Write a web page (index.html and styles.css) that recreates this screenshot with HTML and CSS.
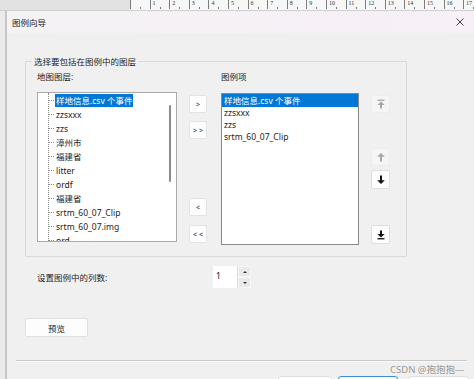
FILE: index.html
```html
<!DOCTYPE html>
<html lang="zh-CN">
<head>
    <meta charset="UTF-8">
    <title>图例向导</title>
    <link rel="stylesheet" href="styles.css">
</head>
<body>
    <div class="topbar">
        <div class="topbar-blank"></div>
        <div class="ruler">
            <span class="tick"></span>
            <span class="tick">1</span>
            <span class="tick">2</span>
            <span class="tick">3</span>
            <span class="tick">4</span>
            <span class="tick">5</span>
            <span class="tick">6</span>
            <span class="tick">7</span>
            <span class="tick">8</span>
            <span class="tick">9</span>
            <span class="tick">10</span>
            <span class="tick">11</span>
            <span class="tick">12</span>
            <span class="tick">13</span>
            <span class="tick">14</span>
            <span class="tick">15</span>
            <span class="tick">16</span>
            <span class="tick">17</span>
        </div>
    </div>

    <div class="dialog">
        <div class="titlebar">
            <span class="title">图例向导</span>
            <svg class="close" width="8" height="8" viewBox="0 0 8 8"><path d="M0.5 0.5L7.5 7.5M7.5 0.5L0.5 7.5"/></svg>
        </div>

        <div class="dialog-body">
            <div class="content">
                <div class="group">
                    <div class="group-title">选择要包括在图例中的图层</div>
                    <div class="group-grid">
                        <div class="col-label">地图图层:</div>
                        <div></div>
                        <div class="col-label">图例项</div>
                        <div></div>

                        <div class="listbox tree">
                            <ul class="tree-lines">
                                <li class="node"><span class="sel">样地信息.csv 个事件</span></li>
                                <li class="node"><span>zzsxxx</span></li>
                                <li class="node"><span>zzs</span></li>
                                <li class="node"><span>漳州市</span></li>
                                <li class="node"><span>福建省</span></li>
                                <li class="node"><span>litter</span></li>
                                <li class="node"><span>ordf</span></li>
                                <li class="node"><span>福建省</span></li>
                                <li class="node"><span>srtm_60_07_Clip</span></li>
                                <li class="node"><span>srtm_60_07.img</span></li>
                                <li class="node"><span>ord</span></li>
                            </ul>
                            <div class="scroll-thumb"></div>
                        </div>

                        <div class="move-buttons">
                            <button class="small-btn b1">&gt;</button>
                            <button class="small-btn b2">&gt; &gt;</button>
                            <button class="small-btn b3">&lt;</button>
                            <button class="small-btn b4">&lt; &lt;</button>
                        </div>

                        <div class="listbox legend-list">
                            <div class="legend-item sel">样地信息.csv 个事件</div>
                            <div class="legend-item">zzsxxx</div>
                            <div class="legend-item">zzs</div>
                            <div class="legend-item">srtm_60_07_Clip</div>
                        </div>

                        <div class="order-buttons">
                            <button class="icon-btn disabled o1">
                                <svg width="10" height="10" viewBox="0 0 10 10"><rect x="1.5" y="0.6" width="7" height="1.3"/><polygon points="5,2.6 8.6,6 6,6 6,9.6 4,9.6 4,6 1.4,6"/></svg>
                            </button>
                            <button class="icon-btn disabled o2">
                                <svg width="10" height="10" viewBox="0 0 10 10"><polygon points="5,1 8.8,4.8 6,4.8 6,9.4 4,9.4 4,4.8 1.2,4.8"/></svg>
                            </button>
                            <button class="icon-btn o3">
                                <svg width="10" height="10" viewBox="0 0 10 10"><polygon points="5,9 8.8,5.2 6,5.2 6,0.6 4,0.6 4,5.2 1.2,5.2"/></svg>
                            </button>
                            <button class="icon-btn o4">
                                <svg width="10" height="10" viewBox="0 0 10 10"><polygon points="5,7.4 8.6,4 6,4 6,0.4 4,0.4 4,4 1.4,4"/><rect x="1.5" y="8.1" width="7" height="1.3"/></svg>
                            </button>
                        </div>
                    </div>
                </div>

                <div class="cols-row">
                    <span class="cols-label">设置图例中的列数:</span>
                    <div class="spin">
                        <span class="spin-value">1</span>
                        <div class="spin-arrows">
                            <span class="arrow up"></span>
                            <span class="arrow down"></span>
                        </div>
                    </div>
                </div>

                <button class="preview-btn">预览</button>
            </div>

            <div class="separator"></div>

            <div class="footer">
                <button class="foot-btn f1"></button>
                <button class="foot-btn f2 default"></button>
                <button class="foot-btn f3"></button>
            </div>
        </div>
    </div>

    <div class="watermark">CSDN @抱抱抱---</div>
</body>
</html>
```

FILE: styles.css
```css
body {
    margin: 0;
    width: 474px;
    height: 379px;
    overflow: hidden;
    background: #ebebeb;
    font-family: 'Noto Sans', 'Noto Sans CJK SC', sans-serif;
    font-size: 8.5px;
    color: #1b1b1b;
    position: relative;
}

button {
    font-family: inherit;
    padding: 0;
    margin: 0;
}

/* ruler strip behind the dialog */
.topbar {
    display: flex;
    height: 10px;
    background: #e2e2e2;
    border-bottom: 1px solid #cfcfcf;
}

.topbar-blank {
    width: 130px;
    flex-shrink: 0;
}

.ruler {
    display: flex;
    flex: 1;
    background: #f7f7f7;
    overflow: hidden;
}

.tick {
    position: relative;
    flex-shrink: 0;
    width: 19.6px;
    height: 9px;
    border-left: 1px solid #7c7c7c;
    box-sizing: border-box;
    font-family: 'Liberation Serif', serif;
    font-size: 6px;
    line-height: 7px;
    padding-left: 2px;
    color: #333;
}

.tick::after {
    content: '';
    position: absolute;
    left: 9px;
    bottom: 0;
    width: 1px;
    height: 2px;
    background: #7c7c7c;
}

/* dialog window */
.dialog {
    margin-left: 5px;
    border-left: 2px solid #c6c6c6;
    background: #f0f0f0;
    height: 368px;
}

.titlebar {
    display: flex;
    align-items: center;
    justify-content: space-between;
    height: 22px;
    padding: 0 10px 0 5px;
    background: linear-gradient(90deg, #f4f2f4 0%, #f7f0f7 100%);
}

.title {
    font-size: 8.5px;
}

.close {
    stroke: #2a2a2a;
    stroke-width: 0.9;
    fill: none;
}

.dialog-body {
    padding-left: 9px;
}

.content {
    padding-left: 9px;
    padding-top: 28px;
}

.group {
    width: 380px;
    height: 194px;
    border: 1px solid #dadada;
}

.group-title {
    display: table;
    margin: -6px 0 0 6px;
    padding: 0 2px;
    line-height: 12px;
    background: #f0f0f0;
}

.group-grid {
    display: grid;
    grid-template-columns: 140px 18px 140px 19px;
    column-gap: 12px;
    row-gap: 9px;
    padding: 3px 0 0 11px;
}

.group-grid > :nth-child(3) {
    margin-left: 2px;
}

.col-label {
    line-height: 12px;
}

.listbox {
    position: relative;
    background: #ffffff;
    box-sizing: border-box;
    overflow: hidden;
}

.tree {
    height: 150px;
    border: 1px solid #a9a9a9;
}

.tree-lines {
    list-style: none;
    margin: 0 0 0 10px;
    padding: 0;
    border-left: 1px dotted #8a8a8a;
}

.node {
    display: flex;
    align-items: center;
    height: 14px;
    white-space: nowrap;
}

.node::before {
    content: '';
    width: 5px;
    margin-right: 1px;
    border-top: 1px dotted #8a8a8a;
}

.node span {
    padding: 0 1px;
    line-height: 13px;
}

.sel {
    background: #0078d7;
    color: #ffffff;
}

.scroll-thumb {
    position: absolute;
    top: 12px;
    right: 5px;
    width: 2px;
    height: 77px;
    border-radius: 1px;
    background: #8b8b8b;
}

.legend-list {
    height: 152px;
    margin-top: 1px;
    margin-left: 2px;
    border: 1px solid #8a8a8a;
}

.legend-item {
    height: 12px;
    line-height: 12px;
    padding-left: 2px;
    white-space: nowrap;
}

.legend-item.sel {
    height: 13px;
    line-height: 13px;
}

.move-buttons,
.order-buttons {
    display: flex;
    flex-direction: column;
}

.small-btn {
    width: 18px;
    height: 18px;
    background: #fdfdfd;
    border: 1px solid #e3e3e3;
    border-radius: 2px;
    font-size: 7px;
    color: #333;
}

.b1 { margin-top: 3px; }
.b2 { margin-top: 8px; }
.b3 { margin-top: 59px; }
.b4 { margin-top: 9px; }

.icon-btn {
    display: flex;
    align-items: center;
    justify-content: center;
    width: 19px;
    height: 18px;
    background: #fdfdfd;
    border: 1px solid #dedede;
    border-radius: 2px;
    fill: #111111;
}

.icon-btn.disabled {
    background: #f5f5f5;
    border-color: #ededed;
    fill: #a6a6a6;
}

.o1 { margin-top: 3px; }
.o2 { margin-top: 35px; }
.o3 { margin-top: 4px; height: 19px; }
.o4 { margin-top: 36px; height: 19px; }

/* column count */
.cols-row {
    display: flex;
    align-items: center;
    margin-top: 9px;
    padding-left: 12px;
}

.cols-label {
    width: 176px;
}

.spin {
    display: flex;
    height: 22px;
}

.spin-value {
    width: 21px;
    padding-left: 3px;
    line-height: 20px;
    background: #ffffff;
}

.spin-arrows {
    display: flex;
    flex-direction: column;
    width: 13px;
    background: #e9e9e9;
    border-left: 1px solid #dcdcdc;
}

.arrow {
    flex: 1;
    display: flex;
    align-items: center;
    justify-content: center;
    border: 1px solid #f7f7f7;
}

.arrow::before {
    content: '';
    border-left: 2px solid transparent;
    border-right: 2px solid transparent;
}

.arrow.up::before {
    border-bottom: 2px solid #333;
}

.arrow.down::before {
    border-top: 2px solid #333;
}

.preview-btn {
    display: block;
    width: 63px;
    height: 19px;
    margin-top: 30px;
    background: #fdfdfd;
    border: 1px solid #e0e0e0;
    border-radius: 2px;
    font-size: 8.5px;
    color: #1b1b1b;
}

.separator {
    width: 451px;
    margin-top: 23px;
    border-top: 1px solid #c9c9c9;
    border-bottom: 1px solid #fafafa;
}

.footer {
    display: flex;
    margin-top: 14px;
    padding-left: 262px;
}

.foot-btn {
    height: 22px;
    background: #fdfdfd;
    border: 1px solid #e0e0e0;
    border-radius: 3px;
}

.f1 { width: 54px; }
.f2 { width: 60px; margin-left: 6px; }
.f3 { width: 61px; margin-left: 10px; }

.foot-btn.default {
    border-color: #3c8fd6;
}

.watermark {
    position: absolute;
    left: 390px;
    top: 362px;
    font-size: 9.5px;
    color: rgba(120, 120, 120, 0.75);
    white-space: nowrap;
}
```
